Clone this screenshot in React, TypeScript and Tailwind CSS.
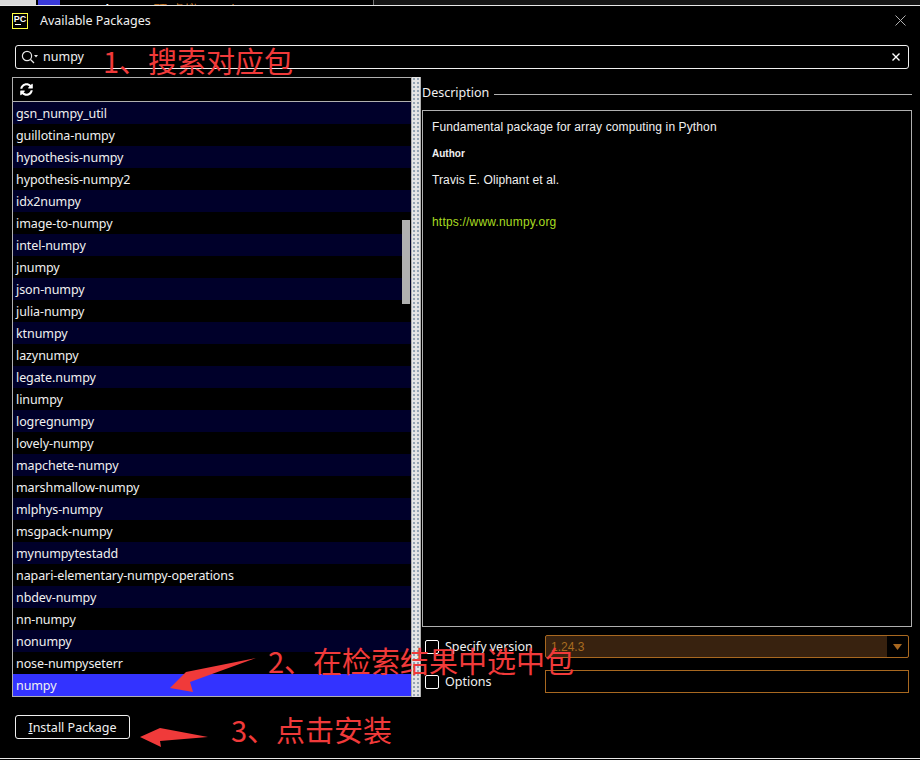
import { FaSyncAlt } from "react-icons/fa";

const packages = [
  "gsn_numpy_util",
  "guillotina-numpy",
  "hypothesis-numpy",
  "hypothesis-numpy2",
  "idx2numpy",
  "image-to-numpy",
  "intel-numpy",
  "jnumpy",
  "json-numpy",
  "julia-numpy",
  "ktnumpy",
  "lazynumpy",
  "legate.numpy",
  "linumpy",
  "logregnumpy",
  "lovely-numpy",
  "mapchete-numpy",
  "marshmallow-numpy",
  "mlphys-numpy",
  "msgpack-numpy",
  "mynumpytestadd",
  "napari-elementary-numpy-operations",
  "nbdev-numpy",
  "nn-numpy",
  "nonumpy",
  "nose-numpyseterr",
  "numpy",
];

function PackageRow({ name, index }: { name: string; index: number }) {
  const selected = name === "numpy";
  const tone = selected ? "bg-[#3333ff]" : index % 2 === 0 ? "bg-[#00002a]" : "bg-black";
  return (
    <div className={`h-[22px] pl-[3px] pt-[2px] flex items-center text-[12.5px] tracking-[-0.09px] text-[#f0f0f0] ${tone}`}>
      {name}
    </div>
  );
}

function Checkbox() {
  return <span className="w-[14px] h-[14px] border border-white rounded-[2px] shrink-0" />;
}

export default function App() {
  return (
    <div className="w-[920px] h-[760px] bg-black flex flex-col relative overflow-hidden font-['Noto_Sans','Open_Sans',sans-serif] text-[#f0f0f0]">
      {/* window behind the dialog */}
      <div className="h-[5px] flex overflow-hidden bg-[#141414] shrink-0">
        <div className="w-[36px] bg-[#d8d8d8]" />
        <div className="w-[2px] bg-black" />
        <div className="w-[22px] bg-[#3a3ad8]" />
        <div className="w-[313px] bg-black pl-[25px] flex items-end gap-[6px] text-[13px] leading-[5px] whitespace-nowrap overflow-hidden">
          <span className="-mb-[7px] text-white font-semibold">Python3.9</span>
          <span className="-mb-[7px] text-[#c87820]">环(虚拟3 (Python3.9)</span>
        </div>
        <div className="w-[1px] bg-[#777777]" />
      </div>
      <div className="h-[1px] bg-[#e8e8e8] shrink-0" />

      {/* title bar */}
      <div className="h-[30px] mt-[1px] pl-[12px] pr-[14px] flex items-center shrink-0">
        <div className="w-[16px] h-[16px] border border-[#ffff40] flex flex-col items-center pt-[1px] mt-[-3px]">
          <span className="text-[9px] leading-[8px] font-bold text-white font-['Liberation_Sans',sans-serif]">PC</span>
          <span className="w-[6px] h-[1px] bg-white self-start ml-[2px] mt-[1px]" />
        </div>
        <span className="ml-[12px] mt-[-2px] text-[12.5px] tracking-[-0.02px]">Available Packages</span>
        <svg className="ml-auto mt-[-4px]" width="11" height="11" viewBox="0 0 11 11" fill="none" stroke="#b0b0b0" strokeWidth="1">
          <path d="M0.5 0.5 10.5 10.5M10.5 0.5 0.5 10.5" />
        </svg>
      </div>

      {/* search */}
      <div className="h-[24px] mt-[8px] ml-[15px] w-[894px] border border-[#f0f0f0] rounded-[3px] flex items-center pl-[5px] pr-[8px] shrink-0">
        <svg width="18" height="14" viewBox="0 0 18 14" fill="none" stroke="#e8e8e8" strokeWidth="1.2">
          <circle cx="6" cy="6" r="4.6" />
          <path d="M9.5 9.5 13 13" />
          <path d="M13 5h4l-2 2.4z" fill="#e8e8e8" stroke="none" />
        </svg>
        <span className="ml-[4px] text-[12.5px]">numpy</span>
        <svg className="ml-auto" width="8" height="8" viewBox="0 0 8 8" fill="none" stroke="#ffffff" strokeWidth="1.4">
          <path d="M0.5 0.5 7.5 7.5M7.5 0.5 0.5 7.5" />
        </svg>
      </div>

      {/* packages and details */}
      <div className="flex mt-[8px] ml-[12px] h-[620px] shrink-0">
        <div className="w-[400px] border border-[#b0b0b0] flex flex-col relative">
          <div className="h-[24px] border-b border-[#b0b0b0] pl-[7px] flex items-center shrink-0">
            <FaSyncAlt size={13} color="#ffffff" />
          </div>
          {packages.map((name, index) => (
            <PackageRow key={name} name={name} index={index} />
          ))}
          <div className="absolute left-[389px] top-[142px] w-[8px] h-[84px] bg-[#b0b0b0]" />
        </div>

        <div className="w-[9px] bg-[#e4e4e4] bg-[radial-gradient(#8fa0b0_0.7px,transparent_0.8px)] bg-[length:4px_4px] border-r border-[#b0b0b0]" />

        <div className="w-[490px] ml-[1px] flex flex-col">
          <div className="h-[32px] flex items-center gap-[5px] text-[12.5px] shrink-0">
            <span>Description</span>
            <span className="flex-1 h-[1px] bg-[#b0b0b0] mt-[2px]" />
          </div>
          <div className="h-[517px] border border-[#b0b0b0] mt-[1px] pl-[9px] pt-[8px] font-['Liberation_Sans',sans-serif] text-[12px] tracking-[0.12px] shrink-0">
            <p className="leading-[16px]">Fundamental package for array computing in Python</p>
            <p className="mt-[13px] text-[10px] leading-[11px] font-bold tracking-normal">Author</p>
            <p className="mt-[13px] leading-[16px]">Travis E. Oliphant et al.</p>
            <p className="mt-[26px] leading-[16px] text-[#a8dc20] tracking-[0.19px]">https://www.numpy.org</p>
          </div>
          <div className="flex mt-[8px] pl-[3px] pr-[3px] items-center h-[23px]">
            <Checkbox />
            <span className="ml-[6px] w-[100px] pt-[2px] text-[12.5px]">Specify version</span>
            <div className="flex-1 h-[23px] border border-[#a86820] rounded-[2px] flex items-center bg-[#38220f]">
              <span className="pl-[5px] text-[12px] text-[#a86c20] font-['Liberation_Sans',sans-serif]">1.24.3</span>
              <span className="ml-auto w-[21px] h-full bg-black flex items-center justify-center rounded-r-[2px]">
                <svg width="9" height="6" viewBox="0 0 9 6">
                  <path d="M0 0h9L4.5 6z" fill="#a86820" />
                </svg>
              </span>
            </div>
          </div>
          <div className="flex mt-[12px] pl-[3px] pr-[3px] items-center h-[23px]">
            <Checkbox />
            <span className="ml-[6px] w-[100px] pt-[2px] text-[12.5px]">Options</span>
            <div className="flex-1 h-[23px] border border-[#a86820]" />
          </div>
        </div>
      </div>

      {/* install */}
      <div className="mt-[18px] ml-[15px] w-[115px] h-[24px] pt-[2px] border border-[#f0f0f0] rounded-[3px] flex items-center justify-center text-[12.5px] shrink-0">
        <span>
          <span className="underline">I</span>nstall Package
        </span>
      </div>

      <div className="absolute left-0 right-0 top-[758px] h-[1px] bg-[#e8e8e8]" />

      {/* red notes drawn over the dialog */}
      <div className="absolute left-[103px] top-[39px] text-[29px] leading-[42px] text-[#f03a3a] whitespace-nowrap font-['Noto_Sans_CJK_SC',sans-serif]">
        1、搜索对应包
      </div>
      <div className="absolute left-[268px] top-[639px] text-[29px] leading-[42px] text-[#f03a3a] whitespace-nowrap font-['Noto_Sans_CJK_SC',sans-serif]">
        2、在检索结果中选中包
      </div>
      <div className="absolute left-[231px] top-[708px] text-[29px] leading-[42px] text-[#f03a3a] whitespace-nowrap font-['Noto_Sans_CJK_SC',sans-serif]">
        3、点击安装
      </div>
      <svg className="absolute left-0 top-0 pointer-events-none" width="920" height="760">
        <path d="M256 658 186 672 170 688 193 692 190 682z" fill="#f03a3a" />
        <path d="M208 737 160 728 140 737 161 747 160 741z" fill="#f03a3a" />
      </svg>
    </div>
  );
}
